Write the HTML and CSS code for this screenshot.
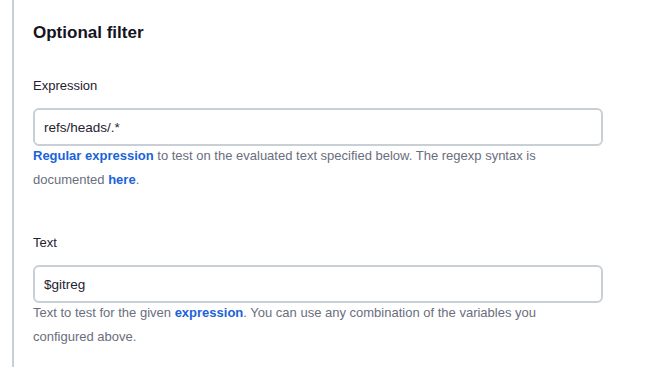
FILE: index.html
```html
<!DOCTYPE html>
<html lang="en">
<head>
<meta charset="UTF-8" />
<meta name="viewport" content="width=device-width, initial-scale=1" />
<title>Optional filter</title>
<link rel="stylesheet" href="styles.css">
</head>
<body>
  <div class="section">
    <h2 class="section-title">Optional filter</h2>

    <div class="field">
      <label class="field-label" for="expression">Expression</label>
      <input class="field-input" type="text" id="expression" name="expression" value="refs/heads/.*" />
      <div class="field-help">
        <a href="#">Regular expression</a> to test on the evaluated text specified below. The regexp syntax is
        documented <a href="#">here</a>.
      </div>
    </div>

    <div class="field">
      <label class="field-label" for="text">Text</label>
      <input class="field-input" type="text" id="text" name="text" value="$gitreg" />
      <div class="field-help">
        Text to test for the given <a href="#">expression</a>. You can use any combination of the variables you
        configured above.
      </div>
    </div>
  </div>
</body>
</html>
```

FILE: styles.css
```css
* {
  box-sizing: border-box;
}
body {
  margin: 0;
  background: #fff;
  font-family: 'Liberation Sans', Arial, sans-serif;
  color: #1f2230;
}
.section {
  margin-left: 12px;
  border-left: 2px solid #c9d0d5;
  padding: 22px 0 0 19px;
  height: 367px;
  overflow: hidden;
}
.section-title {
  margin: 0 0 33px;
  font-size: 17px;
  font-weight: 700;
  color: #14141f;
  line-height: 22px;
}
.field {
  width: 570px;
  margin-bottom: 42px;
}
.field-label {
  display: block;
  font-size: 13px;
  line-height: 18px;
  margin-bottom: 13px;
}
.field-input {
  display: block;
  width: 100%;
  height: 38px;
  padding: 0 9px;
  font-family: inherit;
  font-size: 13.5px;
  color: #1f2230;
  border: 2px solid #c9d0d5;
  border-radius: 6px;
  outline: none;
}
.field-help {
  max-width: 545px;
  margin-top: -2px;
  font-size: 13px;
  line-height: 24px;
  color: #6a6e7e;
}
.field-help a {
  color: #1a63d8;
  font-weight: 600;
  text-decoration: none;
}
```
